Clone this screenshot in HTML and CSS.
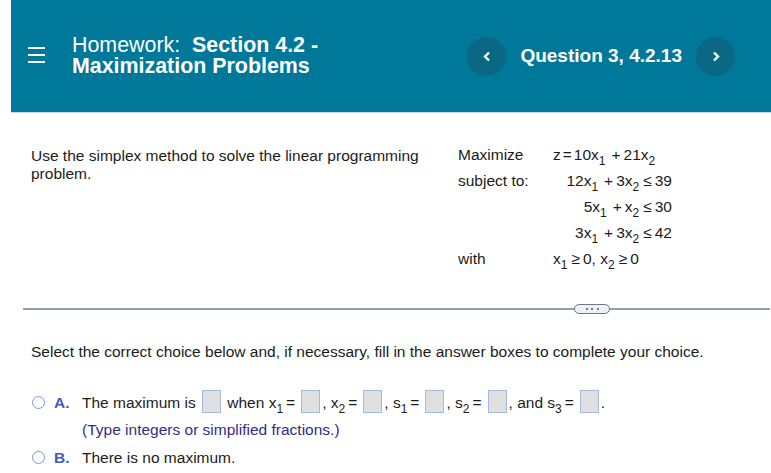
FILE: index.html
```html
<!DOCTYPE html>
<html>
<head>
<meta charset="utf-8">
<link rel="stylesheet" href="styles.css">
</head>
<body>
<header class="header">
  <svg class="menu" width="17" height="16" viewBox="0 0 17 16"><rect x="0" y="0" width="17" height="2" fill="#fff"/><rect x="0" y="7" width="17" height="2" fill="#fff"/><rect x="0" y="14" width="17" height="2" fill="#fff"/></svg>
  <div class="title">Homework:&nbsp; <b>Section 4.2 -</b><br><b>Maximization Problems</b></div>
  <nav class="nav">
    <span class="circle"><svg width="8" height="11" viewBox="0 0 8 11"><path d="M6 1.5 L2 5.5 L6 9.5" fill="none" stroke="#fff" stroke-width="2.4"/></svg></span>
    <span class="qtitle">Question 3, 4.2.13</span>
    <span class="circle"><svg width="8" height="11" viewBox="0 0 8 11"><path d="M2 1.5 L6 5.5 L2 9.5" fill="none" stroke="#fff" stroke-width="2.4"/></svg></span>
  </nav>
</header>
<main class="main">
  <section class="problem">
    <p class="prompt">Use the simplex method to solve the linear programming problem.</p>
    <div class="math">
      <div class="lbl">Maximize</div>
      <div class="expr left">z<span class="op">=</span>10x<sub>1</sub><span class="op plus">+</span>21x<sub>2</sub></div>
      <div class="lbl">subject to:</div>
      <div class="expr right">12x<sub>1</sub><span class="op plus">+</span>3x<sub>2</sub><span class="op rel">≤</span>39</div>
      <div class="lbl"></div>
      <div class="expr right">5x<sub>1</sub><span class="op plus">+</span>x<sub>2</sub><span class="op rel">≤</span>30</div>
      <div class="lbl"></div>
      <div class="expr right">3x<sub>1</sub><span class="op plus">+</span>3x<sub>2</sub><span class="op rel">≤</span>42</div>
      <div class="lbl">with</div>
      <div class="expr left">x<sub>1</sub><span class="op rel">≥</span>0, x<sub>2</sub><span class="op rel">≥</span>0</div>
    </div>
  </section>
  <div class="divider">
    <span class="rule first"></span>
    <span class="pill"><i></i><i></i><i></i></span>
    <span class="rule"></span>
  </div>
  <p class="instr">Select the correct choice below and, if necessary, fill in the answer boxes to complete your choice.</p>
  <div class="option optA">
    <span class="radio"></span>
    <span class="letter">A.</span>
    <div class="body">
      <div class="ansline">The maximum is <span class="box"></span> when x<sub>1</sub><span class="op">=</span><span class="box"></span>, x<sub>2</sub><span class="op">=</span><span class="box"></span>, s<sub>1</sub><span class="op">=</span><span class="box"></span>, s<sub>2</sub><span class="op">=</span><span class="box"></span>, and s<sub>3</sub><span class="op">=</span><span class="box"></span>.</div>
      <div class="hint">(Type integers or simplified fractions.)</div>
    </div>
  </div>
  <div class="option optB">
    <span class="radio"></span>
    <span class="letter">B.</span>
    <div class="body">There is no maximum.</div>
  </div>
</main>
</body>
</html>
```
FILE: styles.css
```css
body {
  margin: 0;
  font-family: "Liberation Sans", Arial, sans-serif;
  color: #1b1b1b;
  background: #fff;
}
.header {
  margin-left: 11px;
  height: 112px;
  background: #00789a;
  border-bottom: 1px solid #cdd6dc;
  display: flex;
  align-items: center;
  padding: 0 36px 0 17px;
  color: #fff;
}
.menu {
  display: block;
  margin-top: -2px;
}
.title {
  margin-left: 27px;
  font-size: 21.4px;
  line-height: 21px;
}
.nav {
  margin-left: auto;
  display: flex;
  align-items: center;
  gap: 14px;
}
.circle {
  width: 39px;
  height: 39px;
  border-radius: 50%;
  background: #0a6884;
  display: flex;
  align-items: center;
  justify-content: center;
}
.circle svg { display: block; }
.qtitle {
  font-size: 19px;
  font-weight: bold;
}
.main {
  padding-left: 31px;
}
.problem {
  display: flex;
  padding-top: 29px;
  font-size: 15.5px;
}
.prompt {
  margin: 5px 0 0 0;
  width: 427px;
  line-height: 18px;
}
.math {
  display: grid;
  grid-template-columns: 95px 119px;
  grid-auto-rows: 26px;
  line-height: 26px;
}
.expr.left { text-align: left; }
.expr.right { text-align: right; }
sub {
  font-size: 12px;
  line-height: 0;
  vertical-align: -5px;
}
.op {
  margin: 0 2px;
}
.op.plus {
  margin: 0 3px 0 6px;
}
.op.rel {
  margin: 0 3px 0 4px;
}
.divider {
  display: flex;
  align-items: center;
  height: 11px;
  margin: 31px 1px 0 -8px;
}
.rule {
  flex: 1;
  height: 2px;
  background: #979da5;
}
.rule.first {
  flex: 0 0 551px;
}
.pill {
  width: 34px;
  height: 8px;
  border: 1.5px solid #717985;
  border-radius: 6px;
  background: #eef2f6;
  display: flex;
  align-items: center;
  justify-content: center;
  gap: 3.5px;
}
.pill i {
  width: 2px;
  height: 2px;
  background: #4a525d;
  border-radius: 50%;
}
.instr {
  margin: 29px 0 0 0;
  font-size: 15.5px;
  line-height: 18px;
}
.option {
  display: grid;
  grid-template-columns: 22px 28px 1fr;
  padding-left: 1px;
  font-size: 15.5px;
}
.optA {
  margin-top: 29px;
}
.optB {
  margin-top: 10px;
  line-height: 18px;
}
.radio {
  width: 11px;
  height: 11px;
  border: 1.6px solid #7896d6;
  border-radius: 50%;
  background: #fff;
}
.optA .radio { margin-top: 6px; }
.optB .radio { margin-top: 2px; }
.letter {
  font-weight: bold;
  color: #3d5cbc;
}
.optA .letter { line-height: 26px; }
.ansline {
  line-height: 26px;
}
.ansline .op {
  margin: 0 4px 0 3px;
}
.box {
  display: inline-block;
  width: 17px;
  height: 21px;
  background: #e0e0e0;
  border: 1px solid #a3bbe4;
  vertical-align: -5px;
  margin: 0 2px;
}
.hint {
  margin-top: 5px;
  line-height: 18px;
  color: #332d86;
}
```
